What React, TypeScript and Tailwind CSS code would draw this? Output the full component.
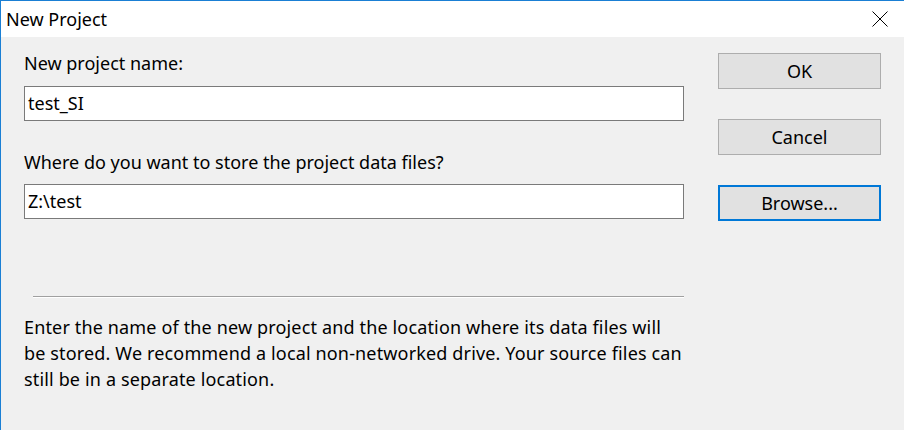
export default function App() {
  const font = { fontFamily: '"Noto Sans", "Open Sans", sans-serif' };
  return (
    <div
      className="w-[904px] h-[430px] overflow-hidden border-l border-t border-[#1a7fd4] bg-[#f0f0f0] text-black text-[18px]"
      style={font}
    >
      <div className="flex h-[36px] items-center justify-between bg-white">
        <span className="pl-[5px] text-[18px] leading-none">New Project</span>
        <svg className="mr-[16px]" width="16" height="16" viewBox="0 0 16 16">
          <path d="M0.5 0.5 L15.5 15.5 M15.5 0.5 L0.5 15.5" stroke="#000" strokeWidth="1" fill="none" />
        </svg>
      </div>

      <div className="flex">
        <div className="ml-[23px] w-[660px]">
          <div className="mt-[14px] h-[24px] leading-[24px]">New project name:</div>
          <div className="mt-[11px] flex h-[35px] items-center border border-[#7a7a7a] bg-white pl-[3px]">
            test_SI
          </div>
          <div className="mt-[29px] h-[24px] leading-[24px]">
            Where do you want to store the project data files?
          </div>
          <div className="mt-[10px] flex h-[35px] items-center border border-[#7a7a7a] bg-white pl-[3px]">
            Z:\test
          </div>
          <div className="ml-[9px] mt-[77px] w-[651px] border-t border-b border-t-[#a0a0a0] border-b-white" />
          <p className="mt-[16px] whitespace-nowrap leading-[26px] tracking-[0.15px]">
            Enter the name of the new project and the location where its data files will
            <br />
            be stored. We recommend a local non-networked drive. Your source files can
            <br />
            still be in a separate location.
          </p>
        </div>

        <div className="ml-[34px] flex w-[163px] flex-col gap-[30px] pt-[16px]">
          <button className="h-[36px] border border-[#adadad] bg-[#e1e1e1]">OK</button>
          <button className="h-[36px] border border-[#adadad] bg-[#e1e1e1]">Cancel</button>
          <button className="h-[36px] border-2 border-[#0078d7] bg-[#e1e1e1]">Browse...</button>
        </div>
      </div>
    </div>
  );
}
